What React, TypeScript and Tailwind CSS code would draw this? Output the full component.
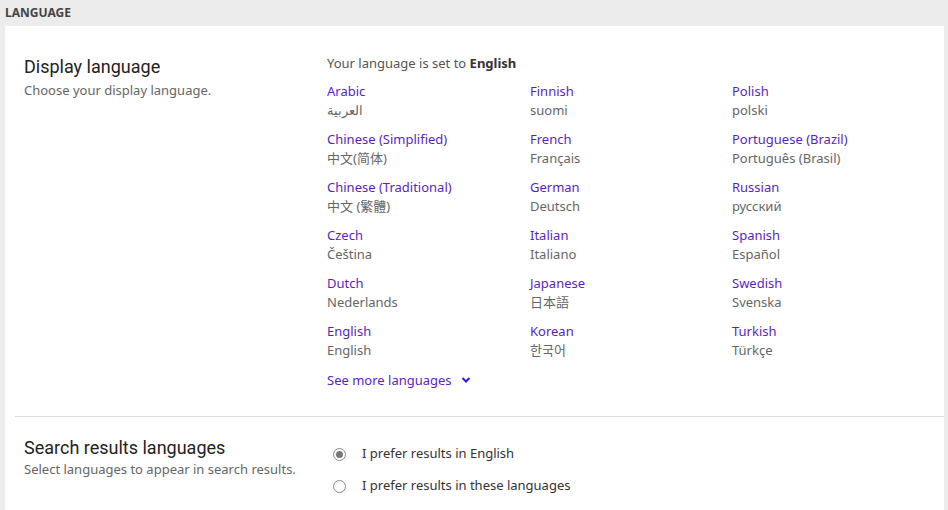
import React from "react";

const langs: [string, string][] = [
  ["Arabic", "العربية"], ["Finnish", "suomi"], ["Polish", "polski"],
  ["Chinese (Simplified)", "中文(简体)"], ["French", "Français"], ["Portuguese (Brazil)", "Português (Brasil)"],
  ["Chinese (Traditional)", "中文 (繁體)"], ["German", "Deutsch"], ["Russian", "русский"],
  ["Czech", "Čeština"], ["Italian", "Italiano"], ["Spanish", "Español"],
  ["Dutch", "Nederlands"], ["Japanese", "日本語"], ["Swedish", "Svenska"],
  ["English", "English"], ["Korean", "한국어"], ["Turkish", "Türkçe"],
];

export default function App() {
  return (
    <div className="w-[948px] h-[510px] overflow-hidden bg-[#ececec] text-[13px]" style={{ fontFamily: '"Noto Sans","Noto Sans CJK SC",sans-serif' }}>
      <div className="h-[26px] flex items-center pl-[5px] text-[12px] font-bold text-[#444]">LANGUAGE</div>
      <div className="ml-[5px] mr-[4px] bg-white h-[484px]">
        <div className="flex pt-[30px] pl-[19px] pb-[27px]">
          <div className="w-[303px]">
            <div className="text-[18px] text-[#222] leading-[22px]" style={{ fontFamily: "Roboto,sans-serif" }}>Display language</div>
            <div className="text-[#666] mt-[3px] leading-[18px]">Choose your display language.</div>
          </div>
          <div>
            <div className="text-[#555] leading-[18px] -mt-[2px]">Your language is set to <b className="text-[#333]">English</b></div>
            <div className="grid grid-cols-[203px_202px_200px] mt-[10px]">
              {langs.map(([a, b]) => (
                <div key={a} className="h-[48px] leading-[19px]">
                  <div className="text-[#5b1fc1]">{a}</div>
                  <div className="text-[#666]">{b}</div>
                </div>
              ))}
            </div>
            <div className="flex items-center gap-[8px] text-[#5b1fc1] mt-[1px] leading-[18px]">
              See more languages
              <svg width="12" height="12" viewBox="0 0 12 12"><path d="M2.5 4l3.5 3.5L9.5 4" stroke="#2a1fd0" strokeWidth="2" fill="none" /></svg>
            </div>
          </div>
        </div>
        <div className="ml-[10px] border-t border-[#dcdcdc]"></div>
        <div className="flex pt-[20px] pl-[19px]">
          <div className="w-[303px]">
            <div className="text-[18px] text-[#222] leading-[22px]" style={{ fontFamily: "Roboto,sans-serif" }}>Search results languages</div>
            <div className="text-[#666] mt-[1px] leading-[18px]">Select languages to appear in search results.</div>
          </div>
          <div className="pt-[1px]">
            {["I prefer results in English", "I prefer results in these languages"].map((t, i) => (
              <div key={t} className="flex items-center h-[32px] text-[#333] -ml-[1px]">
                <span className="w-[13px] h-[13px] rounded-full border border-[#888] flex items-center justify-center mr-[16px] ml-[7px]">
                  {i === 0 && <span className="w-[7px] h-[7px] rounded-full bg-[#777]"></span>}
                </span>
                {t}
              </div>
            ))}
          </div>
        </div>
      </div>
    </div>
  );
}
